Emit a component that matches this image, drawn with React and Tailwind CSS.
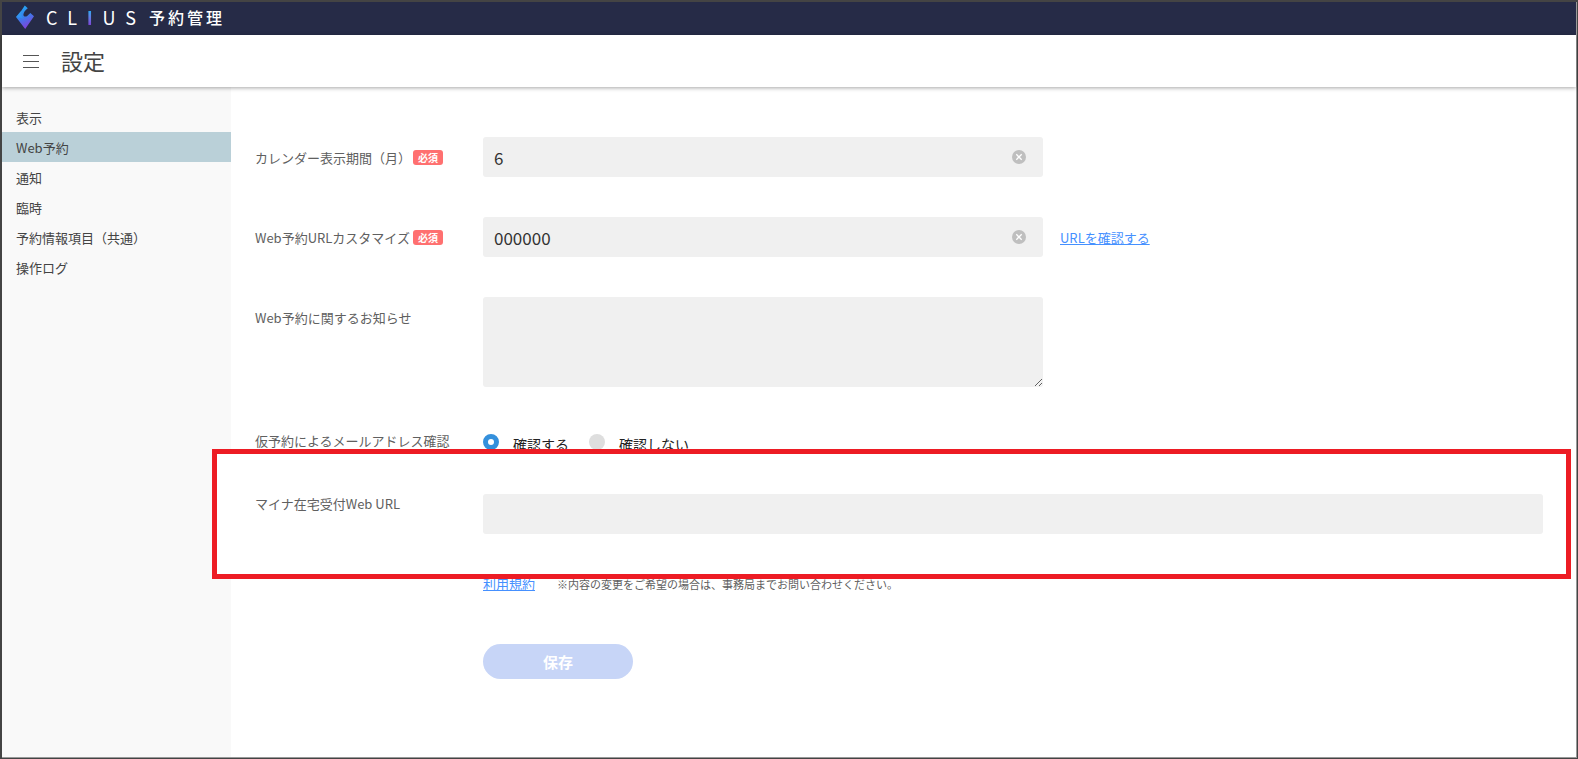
import React, { useState } from 'react';

const menuItems = ['表示', 'Web予約', '通知', '臨時', '予約情報項目（共通）', '操作ログ'];

const Logo = () => (
  <svg width="18" height="24" viewBox="0 0 18 24" aria-hidden="true">
    <defs>
      <linearGradient id="logoGradient" x1="0.2" y1="0" x2="0.6" y2="1">
        <stop offset="0" stopColor="#1fb0f5" />
        <stop offset="0.5" stopColor="#3b7cec" />
        <stop offset="1" stopColor="#8a3ad8" />
      </linearGradient>
    </defs>
    <path
      d="M8.800 0.500 L11.800 3.300 C9.200 5.300 7.600 7.500 7.400 9.500 C7.300 11.700 9.500 12.100 11.200 10.900 L14.300 7.900 L18 11.300 L9.200 24 L0 12.100 L5.300 5.700 Z"
      fill="url(#logoGradient)"
    />
    <path d="M0 12.100 L5.300 5.700 C4.800 10 6 13.300 9.500 14.100 Z" fill="#2f9df2" opacity="0.5" />
  </svg>
);

const Required = () => (
  <span className="rounded-[3px] bg-[#ff7070] px-[5px] text-[10px] leading-[15px] font-bold text-white">必須</span>
);

const ClearableInput = ({ id, value, onChange }) => (
  <div className="relative w-[560px]">
    <input
      id={id}
      type="text"
      value={value}
      onChange={(e) => onChange(e.target.value)}
      className="h-10 w-full rounded-[3px] bg-[#f0f0f0] pr-12 pl-[11px] text-[17px] text-[#333] outline-none"
    />
    <button
      type="button"
      aria-label="クリア"
      onClick={() => onChange('')}
      className="absolute top-[13px] right-[17px] h-[14px] w-[14px]"
    >
      <svg width="14" height="14" viewBox="0 0 14 14">
        <circle cx="7" cy="7" r="7" fill="#bfbfbf" />
        <path d="M4.300 4.300 L9.700 9.700 M9.700 4.300 L4.300 9.700" stroke="#fff" strokeWidth="1.300" />
      </svg>
    </button>
  </div>
);

const radioClass =
  'h-4 w-4 appearance-none rounded-full bg-[#dedede] checked:border-[5px] checked:border-[#3490dc] checked:bg-white';

const App = () => {
  const [active, setActive] = useState('Web予約');
  const [months, setMonths] = useState('6');
  const [customUrl, setCustomUrl] = useState('000000');
  const [notice, setNotice] = useState('');
  const [confirmMail, setConfirmMail] = useState('yes');
  const [mynaUrl, setMynaUrl] = useState('');

  return (
    <div className="flex min-h-screen border-t-2 border-r border-b border-l-2 border-[#444] bg-white font-['Noto_Sans_CJK_JP',sans-serif] text-[13px] text-[#606060]">
      <div className="flex min-w-0 flex-1 flex-col border-r border-b border-[#999]">
        {/* Brand bar */}
        <header className="flex h-[33px] items-center bg-[#262b47] pb-[3px] pl-[14px] text-[16px] leading-6 text-white">
          <Logo />
          <div className="ml-3 flex w-[90px] justify-between text-[18px]">
            <span>C</span>
            <span>L</span>
            <span className="bg-linear-to-b from-[#22a7f0] from-25% to-[#7a3fd6] to-85% bg-clip-text font-bold text-transparent">I</span>
            <span>U</span>
            <span>S</span>
          </div>
          <span className="ml-[13px] font-medium tracking-[3px]">予約管理</span>
        </header>

        {/* Page title */}
        <div className="relative z-20 flex h-[52px] items-center bg-white pl-[21px] shadow-[0_1px_4px_rgba(0,0,0,0.35)]">
          <button type="button" aria-label="メニュー" className="flex w-4 flex-col gap-[5px]">
            <span className="h-px bg-[#555]" />
            <span className="h-px bg-[#555]" />
            <span className="h-px bg-[#555]" />
          </button>
          <h1 className="ml-[22px] pb-[2px] text-[22px] text-[#444]">設定</h1>
        </div>

        <div className="flex flex-1">
          {/* Sidebar */}
          <nav className="w-[229px] shrink-0 bg-[#f9f9f9] pt-[15px]">
            {menuItems.map((item) => (
              <a
                key={item}
                href="#"
                onClick={() => setActive(item)}
                className={`block h-[30px] pl-[14px] leading-8 text-[#444] ${active === item ? 'bg-[#bad0d8]' : ''}`}
              >
                {item}
              </a>
            ))}
          </nav>

          {/* Settings form */}
          <form className="min-w-0 flex-1 pt-[50px]" onSubmit={(e) => e.preventDefault()}>
            <div className="flex h-10 items-center pl-6">
              <div className="flex w-[228px] shrink-0 items-center gap-[2px]">
                <label htmlFor="months" className="pt-[2px] leading-5">カレンダー表示期間（月）</label>
                <Required />
              </div>
              <ClearableInput id="months" value={months} onChange={setMonths} />
            </div>

            <div className="mt-10 flex h-10 items-center pl-6">
              <div className="flex w-[228px] shrink-0 items-center gap-[3px]">
                <label htmlFor="customUrl" className="pt-[2px] leading-5">Web予約URLカスタマイズ</label>
                <Required />
              </div>
              <ClearableInput id="customUrl" value={customUrl} onChange={setCustomUrl} />
              <a href="#" className="ml-[17px] pt-[2px] leading-5 text-[#4590ff] underline">URLを確認する</a>
            </div>

            <div className="mt-10 flex pl-6">
              <label htmlFor="notice" className="w-[228px] shrink-0 pt-[11px] leading-5">Web予約に関するお知らせ</label>
              <textarea
                id="notice"
                value={notice}
                onChange={(e) => setNotice(e.target.value)}
                className="h-[90px] w-[560px] rounded-[3px] bg-[#f0f0f0] p-[11px] outline-none"
              />
            </div>

            <div role="radiogroup" aria-labelledby="mailLabel" className="mt-10 flex h-[22px] pl-6 leading-7">
              <span id="mailLabel" className="w-[228px] shrink-0">仮予約によるメールアドレス確認</span>
              <div className="flex gap-5 text-[14px] text-[#222]">
                <label className="flex gap-[14px]">
                  <input
                    type="radio"
                    name="confirmMail"
                    className={`mt-[7px] ${radioClass}`}
                    checked={confirmMail === 'yes'}
                    onChange={() => setConfirmMail('yes')}
                  />
                  <span className="pt-[3px]">確認する</span>
                </label>
                <label className="flex gap-[14px]">
                  <input
                    type="radio"
                    name="confirmMail"
                    className={`mt-[7px] ${radioClass}`}
                    checked={confirmMail === 'no'}
                    onChange={() => setConfirmMail('no')}
                  />
                  <span className="pt-[3px]">確認しない</span>
                </label>
              </div>
            </div>

            {/* Highlighted row, runs over the edge of the sidebar */}
            <div className="relative z-10 mr-[5px] -ml-[19px] flex border-[5px] border-[#ed1c24] bg-white py-10 pr-[23px] pl-[38px]">
              <label htmlFor="mynaUrl" className="w-[228px] shrink-0 leading-5">マイナ在宅受付Web URL</label>
              <input
                id="mynaUrl"
                type="text"
                value={mynaUrl}
                onChange={(e) => setMynaUrl(e.target.value)}
                className="h-10 min-w-0 flex-1 rounded-[3px] bg-[#f0f0f0] px-[11px] text-[17px] outline-none"
              />
            </div>

            <div className="-mt-[5px] pl-[252px]">
              <div className="flex items-center gap-[22px] leading-5">
                <a href="#" className="text-[#4590ff] underline">利用規約</a>
                <span className="text-[11px]">※内容の変更をご希望の場合は、事務局までお問い合わせください。</span>
              </div>
              <button
                type="submit"
                className="mt-[50px] h-[35px] w-[150px] rounded-full bg-[#c7d5f7] pt-px text-[15px] font-bold text-white"
              >
                保存
              </button>
            </div>
          </form>
        </div>
      </div>
    </div>
  );
};

export default App;
